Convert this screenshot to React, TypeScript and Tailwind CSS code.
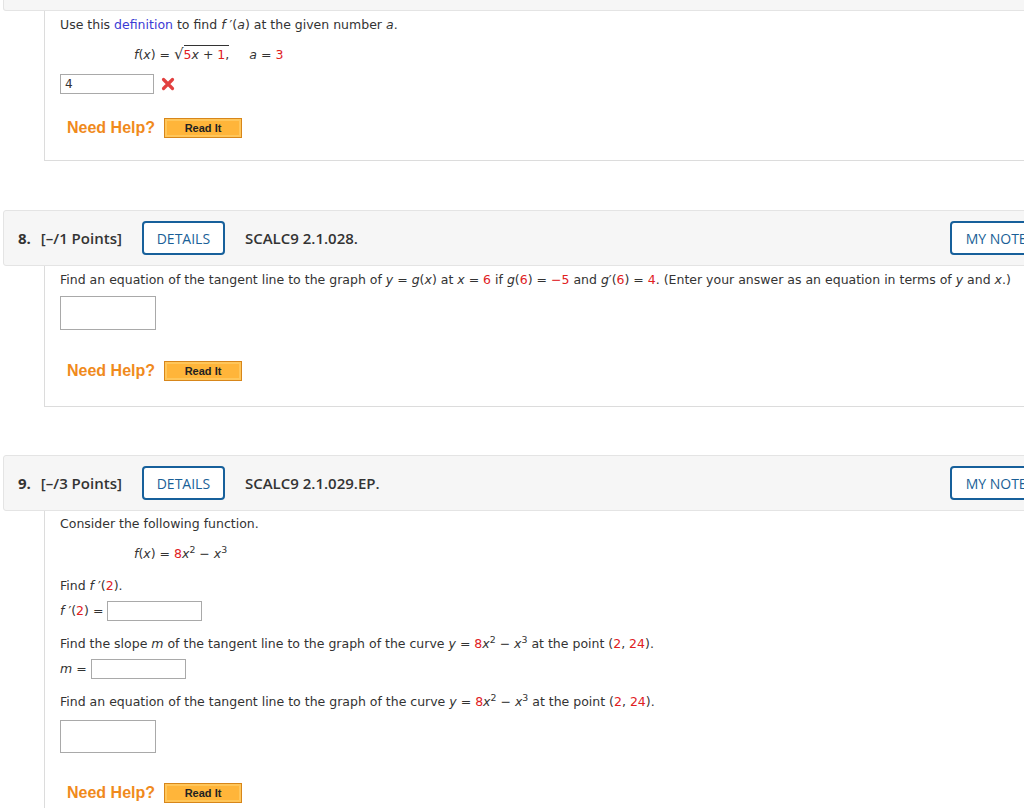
import React from "react";

const body = "font-['DejaVu_Sans',Verdana,sans-serif] text-[12.5px] leading-[18px] text-[#333]";

function Red({ children }: { children: React.ReactNode }) {
  return <span className="text-[#e0201e]">{children}</span>;
}

function HelpRow({ className = "" }: { className?: string }) {
  return (
    <div className={`flex items-center pl-[7px] ${className}`}>
      <span className="font-['Liberation_Sans',Arial,sans-serif] text-[16px] font-bold text-[#f08a1c]">
        Need Help?
      </span>
      <button className="ml-[9px] flex h-[20px] w-[78px] items-center justify-center border border-[#d7861a] bg-[#ffb53a] shadow-[inset_0_0_0_2px_#ffc65a] font-['Liberation_Sans',Arial,sans-serif] text-[11px] font-bold text-[#222]">
        Read It
      </button>
    </div>
  );
}

function Header({ num, points, code }: { num: string; points: string; code: string }) {
  return (
    <div className="ml-[3px] flex h-[56px] w-[1064px] items-center rounded-[3px] border border-[#e4e4e4] bg-[#f6f6f6] pl-[14px] pr-[16px] font-['Open_Sans',sans-serif] text-[15px] text-[#333]">
      <span className="font-bold">{num}</span>
      <span className="ml-[10px] font-semibold">{points}</span>
      <button className="ml-[20px] flex h-[34px] w-[83px] items-center justify-center rounded-[4px] border-2 border-[#17609b] bg-white text-[14px] text-[#1a5f97]">
        DETAILS
      </button>
      <span className="ml-[20px] font-semibold">{code}</span>
      <button className="ml-auto flex h-[34px] w-[100px] items-center justify-center rounded-[4px] border-2 border-[#17609b] bg-white text-[14px] text-[#1a5f97]">
        MY NOTES
      </button>
    </div>
  );
}

function Box({ w, h }: { w: string; h: string }) {
  return <div className={`${w} ${h} border border-[#a9a9a9] bg-white`} />;
}

export default function App() {
  return (
    <div className="h-[808px] w-[1024px] overflow-hidden bg-white">
      <div className="ml-[3px] h-[11px] w-[1064px] rounded-b-[3px] border border-t-0 border-[#e4e4e4] bg-[#f6f6f6]" />

      {/* question 7 body */}
      <div className={`ml-[44px] w-[1040px] border-b border-l border-[#dcdcdc] pb-[22px] pl-[15px] pt-[5px] ${body}`}>
        <p>
          Use this <span className="text-[#3b3bd4]">definition</span> to find <i>f</i> ′(<i>a</i>) at the given number <i>a</i>.
        </p>
        <p className="mt-[11px] pl-[74px]">
          <i>f</i>(<i>x</i>) ={" "}
          <span className="text-[15px]">√</span>
          <span className="border-t border-[#333] pt-[1px]">
            <Red>5</Red><i>x</i> + <Red>1</Red>,
          </span>
          <span className="ml-[20px]"><i>a</i> = <Red>3</Red></span>
        </p>
        <div className="mt-[10px] flex items-center">
          <div className="flex h-[20px] w-[94px] items-center border border-[#a9a9a9] pl-[4px] text-[12px]">4</div>
          <svg width="14" height="14" viewBox="0 0 14 14" className="ml-[7px]">
            <path d="M2.5 2.5 L11.5 11.5 M11.5 2.5 L2.5 11.5" stroke="#e2403f" strokeWidth="3.2" strokeLinecap="round" />
          </svg>
        </div>
        <HelpRow className="mt-[24px]" />
      </div>

      <div className="mt-[49px]">
        <Header num="8." points="[–/1 Points]" code="SCALC9 2.1.028." />
      </div>
      <div className={`ml-[44px] w-[1040px] border-b border-l border-[#dcdcdc] pb-[25px] pl-[15px] pt-[5px] ${body}`}>
        <p className="whitespace-nowrap">
          Find an equation of the tangent line to the graph of <i>y</i> = <i>g</i>(<i>x</i>) at <i>x</i> = <Red>6</Red> if <i>g</i>(<Red>6</Red>) = <Red>−5</Red> and <i>g</i>′(<Red>6</Red>) = <Red>4</Red>. (Enter your answer as an equation in terms of <i>y</i> and <i>x</i>.)
        </p>
        <div className="mt-[7px]">
          <Box w="w-[96px]" h="h-[34px]" />
        </div>
        <HelpRow className="mt-[31px]" />
      </div>

      <div className="mt-[48px]">
        <Header num="9." points="[–/3 Points]" code="SCALC9 2.1.029.EP." />
      </div>
      <div className={`ml-[44px] w-[1040px] border-b border-l border-[#dcdcdc] pb-[24px] pl-[15px] pt-[4px] ${body}`}>
        <p>Consider the following function.</p>
        <p className="mt-[12px] pl-[74px]">
          <i>f</i>(<i>x</i>) = <Red>8</Red><i>x</i><sup>2</sup> − <i>x</i><sup>3</sup>
        </p>
        <p className="mt-[14px]">
          Find <i>f</i> ′(<Red>2</Red>).
        </p>
        <div className="mt-[6px] flex items-center">
          <span><i>f</i> ′(<Red>2</Red>) =</span>
          <div className="ml-[4px]"><Box w="w-[95px]" h="h-[20px]" /></div>
        </div>
        <p className="mt-[14px]">
          Find the slope <i>m</i> of the tangent line to the graph of the curve <i>y</i> = <Red>8</Red><i>x</i><sup>2</sup> − <i>x</i><sup>3</sup> at the point (<Red>2</Red>, <Red>24</Red>).
        </p>
        <div className="mt-[6px] flex items-center">
          <span><i>m</i> =</span>
          <div className="ml-[4px]"><Box w="w-[95px]" h="h-[20px]" /></div>
        </div>
        <p className="mt-[14px]">
          Find an equation of the tangent line to the graph of the curve <i>y</i> = <Red>8</Red><i>x</i><sup>2</sup> − <i>x</i><sup>3</sup> at the point (<Red>2</Red>, <Red>24</Red>).
        </p>
        <div className="mt-[9px]">
          <Box w="w-[96px]" h="h-[33px]" />
        </div>
        <HelpRow className="mt-[30px]" />
      </div>
    </div>
  );
}
